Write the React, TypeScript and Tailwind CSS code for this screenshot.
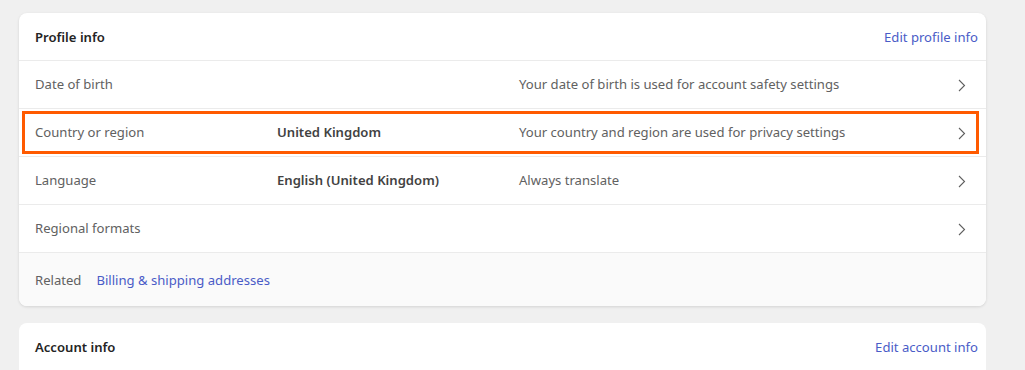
const rows = [
  { label: 'Date of birth', value: '', desc: 'Your date of birth is used for account safety settings' },
  { label: 'Country or region', value: 'United Kingdom', desc: 'Your country and region are used for privacy settings', highlight: true },
  { label: 'Language', value: 'English (United Kingdom)', desc: 'Always translate' },
  { label: 'Regional formats', value: '', desc: '' },
];

function Chevron() {
  return (
    <svg width="8" height="13" viewBox="0 0 8 13" fill="none" className="text-[#616161]">
      <path d="M1 1l5.5 5.5L1 12" stroke="currentColor" strokeWidth="1.1" />
    </svg>
  );
}

export default function App() {
  return (
    <div className="min-h-[370px] bg-[#f0f0f0] pt-[13px] pl-[19px] pr-[39px] text-[13.1px] text-[#616161]" style={{ fontFamily: '"Noto Sans", "Open Sans", sans-serif' }}>
      <div className="bg-white rounded-lg shadow-[0_1px_3px_rgba(0,0,0,0.12)] overflow-hidden">
        <div className="h-[48px] flex items-center justify-between pl-4 pr-2 pt-[2px] border-b border-[#ebebeb]">
          <span className="font-semibold text-[#242424]">Profile info</span>
          <a className="text-[#4a5cc7]">Edit profile info</a>
        </div>
        {rows.map(r => (
          <div key={r.label} className="relative h-[48px] grid grid-cols-[242px_242px_1fr_auto] items-center pl-4 pr-5 pt-[1px] border-b border-[#ebebeb]">
            <span>{r.label}</span>
            <span className="font-semibold text-[#424242]">{r.value}</span>
            <span>{r.desc}</span>
            <Chevron />
            {r.highlight && (
              <div className="absolute left-[3px] right-[7px] top-[2px] bottom-[2px] border-[3px] border-[#ff5a00] pointer-events-none" />
            )}
          </div>
        ))}
        <div className="h-[53px] flex items-center gap-[15px] pl-4 pt-[2px] bg-[#fafafa]">
          <span>Related</span>
          <a className="text-[#4a5cc7]">Billing &amp; shipping addresses</a>
        </div>
      </div>
      <div className="mt-[17px] bg-white rounded-t-lg h-[60px]">
        <div className="h-[48px] flex items-center justify-between pl-4 pr-2 pt-[2px]">
          <span className="font-semibold text-[#242424]">Account info</span>
          <a className="text-[#4a5cc7]">Edit account info</a>
        </div>
      </div>
    </div>
  );
}
